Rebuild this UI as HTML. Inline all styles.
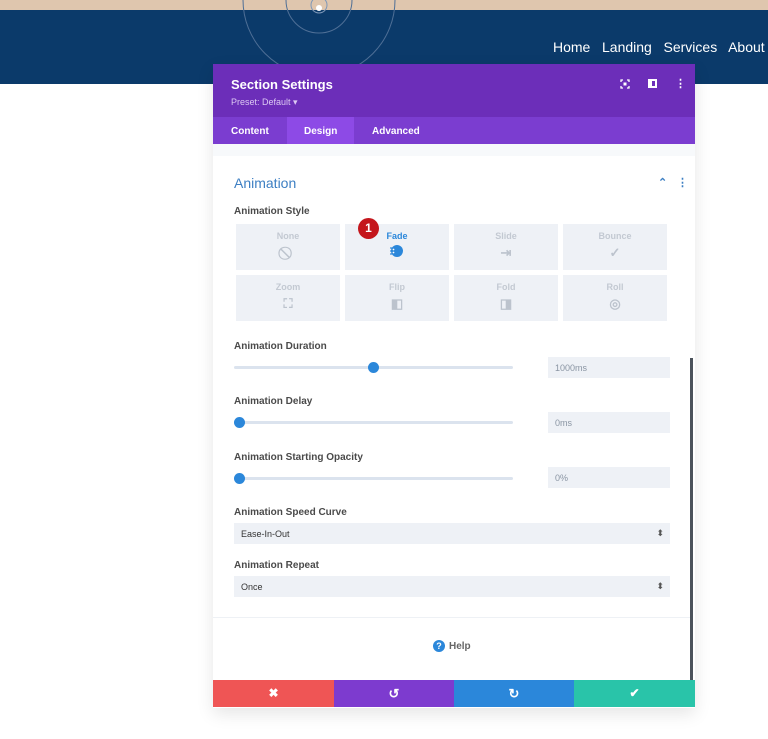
<!DOCTYPE html>
<html><head><style>
*{margin:0;padding:0;box-sizing:border-box}
body{width:768px;height:739px;background:#fff;font-family:"Liberation Sans",sans-serif;position:relative;overflow:hidden}
.a{position:absolute}
.lbl{font-size:10px;font-weight:bold;color:#4a4a4a}
.cell{position:absolute;width:104px;height:46px;background:#eef1f6;text-align:center;font-size:9px;font-weight:bold;color:#c3c9d2;padding-top:7px}
.cell .ic{display:block;margin:4px auto 0;font-size:13px;color:#bcc3cd}
.track{position:absolute;left:234px;width:279px;height:3px;background:#dbe3ee;border-radius:2px}
.knob{position:absolute;width:11px;height:11px;border-radius:50%;background:#2b87da}
.inp{position:absolute;left:548px;width:122px;height:21px;background:#eef1f6;font-size:9px;color:#8a95a3;padding:6px 7px}
.sel{position:absolute;left:234px;width:436px;height:21px;background:#eef1f6;font-size:9px;color:#333;padding:6px 7px}
.sel:after{content:"⬍";position:absolute;right:6px;top:5px;font-size:9px;color:#555}
</style></head><body>
<div class="a" style="left:0;top:0;width:768px;height:10px;background:#dfc6ae"></div>
<div class="a" style="left:0;top:10px;width:768px;height:74px;background:#0b3a6a"></div>
<svg class="a" style="left:230px;top:0" width="180" height="84"><circle cx="89" cy="0" r="76" fill="none" stroke="#4f6f96" stroke-width="1"/><circle cx="89" cy="0" r="33" fill="none" stroke="#4f6f96"/><circle cx="89" cy="5" r="8" fill="none" stroke="#7d97b8"/><circle cx="89" cy="8" r="3" fill="#fff"/></svg>
<div class="a" style="left:553px;top:39px;font-size:14px;color:#fff">Home&nbsp;&nbsp; Landing&nbsp;&nbsp; Services&nbsp;&nbsp; About</div>
<div class="a" style="left:213px;top:64px;width:482px;height:644px;background:#fff;box-shadow:0 6px 16px rgba(0,0,0,.1)"></div>
<div class="a" style="left:213px;top:64px;width:482px;height:53px;background:#6c2eb9"></div>
<div class="a" style="left:231px;top:77px;font-size:13px;font-weight:bold;color:#fff">Section Settings</div>
<div class="a" style="left:231px;top:97px;font-size:9px;color:#dcc9f3">Preset: Default ▾</div>
<svg class="a" style="left:620px;top:79px" width="10" height="10"><path d="M1 3V1H3M7 1H9V3M9 7V9H7M3 9H1V7" fill="none" stroke="#fff" stroke-width="1.3"/><rect x="3.5" y="3.5" width="3" height="3" fill="#fff"/></svg>
<div class="a" style="left:648px;top:79px;width:9px;height:9px;border:2px solid #fff;border-left-width:4px"></div>
<div class="a" style="left:675px;top:77px;font-size:11px;color:#fff;font-weight:bold">⋮</div>
<div class="a" style="left:213px;top:117px;width:482px;height:27px;background:#7b3dd0"></div>
<div class="a" style="left:287px;top:117px;width:67px;height:27px;background:#8d4ae6"></div>
<div class="a" style="left:231px;top:126px;font-size:10px;font-weight:bold;color:#fff">Content</div>
<div class="a" style="left:304px;top:126px;font-size:10px;font-weight:bold;color:#fff">Design</div>
<div class="a" style="left:372px;top:126px;font-size:10px;font-weight:bold;color:#fff">Advanced</div>
<div class="a" style="left:213px;top:144px;width:482px;height:12px;background:#f7f9fb"></div>
<div class="a" style="left:234px;top:175px;font-size:14px;color:#3d7fc3">Animation</div>
<div class="a" style="left:658px;top:176px;font-size:11px;color:#3d7fc3;font-weight:bold">⌃</div>
<div class="a" style="left:677px;top:176px;font-size:11px;color:#3d7fc3;font-weight:bold">⋮</div>
<div class="a lbl" style="left:234px;top:206px">Animation Style</div>
<div class="cell" style="left:236px;top:224px">None<span class="ic">⃠</span></div>
<div class="cell" style="left:345px;top:224px;color:#2b87da">Fade<svg style="display:block;margin:3px auto 0" width="16" height="14"><circle cx="8" cy="7" r="6" fill="#2b87da"/><circle cx="2" cy="4" r=".9" fill="#2b87da"/><circle cx="2" cy="7" r=".9" fill="#2b87da"/><circle cx="2" cy="10" r=".9" fill="#2b87da"/><circle cx="4.5" cy="5.5" r=".9" fill="#fff"/><circle cx="4.5" cy="8.5" r=".9" fill="#fff"/></svg></div>
<div class="cell" style="left:454px;top:224px">Slide<span class="ic">⇥</span></div>
<div class="cell" style="left:563px;top:224px">Bounce<span class="ic">✓</span></div>
<div class="cell" style="left:236px;top:275px">Zoom<span class="ic">⛶</span></div>
<div class="cell" style="left:345px;top:275px">Flip<span class="ic">◧</span></div>
<div class="cell" style="left:454px;top:275px">Fold<span class="ic">◨</span></div>
<div class="cell" style="left:563px;top:275px">Roll<span class="ic">◎</span></div>
<div class="a" style="left:358px;top:218px;width:21px;height:21px;border-radius:50%;background:#c4161c;color:#fff;font-size:12px;font-weight:bold;text-align:center;line-height:21px">1</div>
<div class="a lbl" style="left:234px;top:341px">Animation Duration</div>
<div class="track" style="top:366px"></div><div class="knob" style="left:368px;top:362px"></div>
<div class="inp" style="top:357px">1000ms</div>
<div class="a lbl" style="left:234px;top:396px">Animation Delay</div>
<div class="track" style="top:421px"></div><div class="knob" style="left:234px;top:417px"></div>
<div class="inp" style="top:412px">0ms</div>
<div class="a lbl" style="left:234px;top:452px">Animation Starting Opacity</div>
<div class="track" style="top:477px"></div><div class="knob" style="left:234px;top:473px"></div>
<div class="inp" style="top:467px">0%</div>
<div class="a lbl" style="left:234px;top:507px">Animation Speed Curve</div>
<div class="sel" style="top:523px">Ease-In-Out</div>
<div class="a lbl" style="left:234px;top:560px">Animation Repeat</div>
<div class="sel" style="top:576px">Once</div>
<div class="a" style="left:213px;top:617px;width:478px;height:1px;background:#eef1f5"></div>
<div class="a" style="left:433px;top:640px;width:12px;height:12px;border-radius:50%;background:#2b87da;color:#fff;font-size:9px;font-weight:bold;text-align:center;line-height:12px">?</div>
<div class="a" style="left:449px;top:641px;font-size:10px;font-weight:bold;color:#666">Help</div>
<div class="a" style="left:690px;top:358px;width:3px;height:322px;background:#4b525b"></div>
<div class="a" style="left:213px;top:680px;width:121px;height:27px;background:#ef5555;color:#fff;text-align:center;line-height:27px;font-size:12px;font-weight:bold">✖</div>
<div class="a" style="left:334px;top:680px;width:120px;height:27px;background:#7d3bcf;color:#fff;text-align:center;line-height:27px;font-size:13px;font-weight:bold">↺</div>
<div class="a" style="left:454px;top:680px;width:120px;height:27px;background:#2b87da;color:#fff;text-align:center;line-height:27px;font-size:13px;font-weight:bold">↻</div>
<div class="a" style="left:574px;top:680px;width:121px;height:27px;background:#29c4a9;color:#fff;text-align:center;line-height:27px;font-size:12px;font-weight:bold">✔</div>
</body></html>
